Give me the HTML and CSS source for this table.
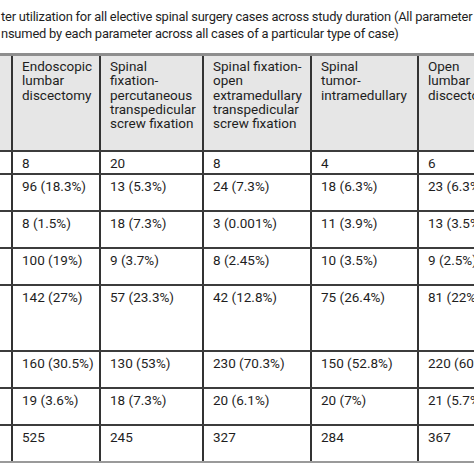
FILE: index.html
```html
<!DOCTYPE html>
<html>
<head>
<meta charset="utf-8">
<link rel="stylesheet" href="styles.css">
</head>
<body>
<div class="caption">
  <div class="cap-line">ter utilization for all elective spinal surgery cases across study duration (All parameter</div>
  <div class="cap-line">nsumed by each parameter across all cases of a particular type of case)</div>
</div>
<table class="data">
  <colgroup>
    <col class="c-param">
    <col class="c1">
    <col class="c2">
    <col class="c3">
    <col class="c4">
    <col class="c5">
  </colgroup>
  <thead>
    <tr class="head">
      <th></th>
      <th>Endoscopic<br>lumbar<br>discectomy</th>
      <th>Spinal<br>fixation-<br>percutaneous<br>transpedicular<br>screw fixation</th>
      <th>Spinal fixation-<br>open<br>extramedullary<br>transpedicular<br>screw fixation</th>
      <th>Spinal<br>tumor-<br>intramedullary</th>
      <th>Open<br>lumbar<br>discectomy</th>
    </tr>
  </thead>
  <tbody>
    <tr class="h1"><td></td><td>8</td><td>20</td><td>8</td><td>4</td><td>6</td></tr>
    <tr class="h2"><td></td><td>96 (18.3%)</td><td>13 (5.3%)</td><td>24 (7.3%)</td><td>18 (6.3%)</td><td>23 (6.3%)</td></tr>
    <tr class="h2"><td></td><td>8 (1.5%)</td><td>18 (7.3%)</td><td>3 (0.001%)</td><td>11 (3.9%)</td><td>13 (3.5%)</td></tr>
    <tr class="h2"><td></td><td>100 (19%)</td><td>9 (3.7%)</td><td>8 (2.45%)</td><td>10 (3.5%)</td><td>9 (2.5%)</td></tr>
    <tr class="h4"><td></td><td>142 (27%)</td><td>57 (23.3%)</td><td>42 (12.8%)</td><td>75 (26.4%)</td><td>81 (22%)</td></tr>
    <tr class="h2"><td></td><td>160 (30.5%)</td><td>130 (53%)</td><td>230 (70.3%)</td><td>150 (52.8%)</td><td>220 (60%)</td></tr>
    <tr class="h2"><td></td><td>19 (3.6%)</td><td>18 (7.3%)</td><td>20 (6.1%)</td><td>20 (7%)</td><td>21 (5.7%)</td></tr>
    <tr class="h2 last"><td></td><td>525</td><td>245</td><td>327</td><td>284</td><td>367</td></tr>
  </tbody>
</table>
</body>
</html>
```

FILE: styles.css
```css
html, body {
  margin: 0;
  padding: 0;
  width: 474px;
  height: 474px;
  overflow: hidden;
  background: #ffffff;
}

body {
  font-family: Roboto, "Open Sans", sans-serif;
  color: #1e1e1e;
}

.caption {
  padding: 8px 0 0 1px;
  font-size: 12.9px;
  letter-spacing: -0.2px;
  line-height: 17px;
  white-space: nowrap;
}

.data {
  margin-top: 11px;
  margin-left: -100px;
  border-collapse: collapse;
  table-layout: fixed;
  width: 624px;
  font-size: 13.5px;
  line-height: 14.3px;
  border-top: 3px solid #8e8e8e;
  border-bottom: 2px solid #9a9a9a;
}

.c-param { width: 111px; }
.c1 { width: 88px; }
.c2 { width: 103px; }
.c3 { width: 108px; }
.c4 { width: 107px; }
.c5 { width: 107px; }

.data th,
.data td {
  text-align: left;
  vertical-align: top;
  white-space: nowrap;
  overflow: hidden;
  padding: 4px 9px 3px 9px;
  border-left: 2px solid #333333;
  border-right: 2px solid #333333;
  border-bottom: 2px solid #3c3c3c;
}

.data th {
  font-weight: normal;
  background: #e6e6e6;
  padding-top: 3px;
}

.head { height: 96px; }
.h1 { height: 22px; }
.h2 { height: 37px; }
.h4 { height: 66px; }

.data .last td { border-bottom: 2px solid #9a9a9a; }
```
